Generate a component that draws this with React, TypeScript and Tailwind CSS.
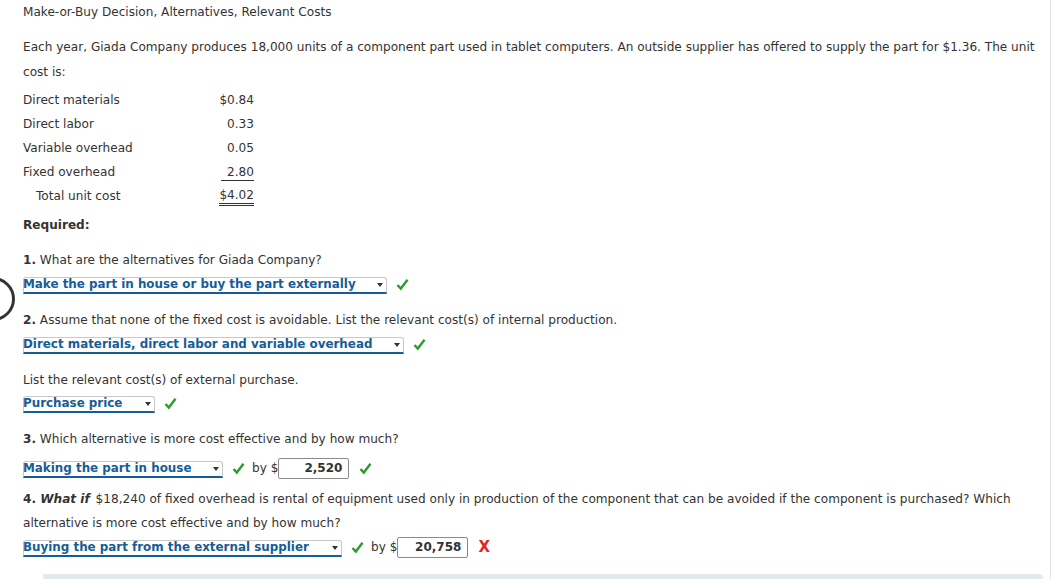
import type { ReactNode } from 'react';

const costs = [
  { label: 'Direct materials', value: '$0.84' },
  { label: 'Direct labor', value: '0.33' },
  { label: 'Variable overhead', value: '0.05' },
  { label: 'Fixed overhead', value: '2.80', line: 'single' },
  { label: 'Total unit cost', value: '$4.02', line: 'double', indent: true },
];

function Check() {
  return (
    <svg className="w-[13px] h-[13px] shrink-0" viewBox="0 0 13 13">
      <path d="M1.5 7 L4.8 10.6 L11.5 1.8" fill="none" stroke="#2c9c2c" strokeWidth="2.4" strokeLinejoin="miter" />
    </svg>
  );
}

function Select({ width, children }: { width: string; children: ReactNode }) {
  return (
    <div
      className={`${width} h-[17px] mt-[2px] flex items-center justify-between bg-white border border-[#c8c8c8] border-b-2 border-b-[#155d97] rounded-t-[3px] text-[11.9px] font-bold text-[#155d97] leading-none shrink-0`}
    >
      <span className="-ml-px whitespace-nowrap">{children}</span>
      <span className="mr-[3px] w-0 h-0 border-l-[3.5px] border-r-[3.5px] border-t-[4px] border-l-transparent border-r-transparent border-t-[#333]" />
    </div>
  );
}

function Amount({ children }: { children: ReactNode }) {
  return (
    <div className="w-[71px] h-[21px] border border-[#8a8a8a] rounded-[2px] flex items-center justify-end pr-[6px] font-bold text-[12px] text-[#333] shrink-0">
      {children}
    </div>
  );
}

export default function App() {
  return (
    <div
      className="relative w-[1054px] h-[579px] overflow-hidden bg-white text-[12.1px] text-[#333]"
      style={{ fontFamily: '"DejaVu Sans", Verdana, sans-serif' }}
    >
      <div className="absolute left-[-29px] top-[277px] w-[44px] h-[44px] rounded-full border-[3px] border-[#333]" />

      <div className="w-[1051px] h-full border-r border-[#e4e4e4] pl-[23px] pr-[2px] pt-[2px]">
        <h1 className="leading-[20px] font-normal">Make-or-Buy Decision, Alternatives, Relevant Costs</h1>

        <p className="mt-[13px] leading-[25px]">
          Each year, Giada Company produces 18,000 units of a component part used in tablet computers. An outside supplier has offered to supply the part for $1.36. The unit cost is:
        </p>

        <div className="mt-[3px] w-[231px]">
          {costs.map((c) => (
            <div key={c.label} className="h-[24px] flex items-center justify-between">
              <span className={c.indent ? 'pl-[13px]' : ''}>{c.label}</span>
              <span
                className={
                  c.line === 'single'
                    ? 'border-b border-[#333] leading-[16px] pl-[6px]'
                    : c.line === 'double'
                    ? 'border-b-[3px] border-double border-[#333] leading-[16px]'
                    : ''
                }
              >
                {c.value}
              </span>
            </div>
          ))}
        </div>

        <p className="mt-[7px] leading-[20px] font-bold">Required:</p>

        <p className="mt-[15px] leading-[20px]">
          <b>1.</b> What are the alternatives for Giada Company?
        </p>
        <div className="mt-[2px] h-[24px] flex items-center gap-[9px]">
          <Select width="w-[364px]">Make the part in house or buy the part externally</Select>
          <Check />
        </div>

        <p className="mt-[14px] leading-[20px]">
          <b>2.</b> Assume that none of the fixed cost is avoidable. List the relevant cost(s) of internal production.
        </p>
        <div className="mt-[2px] h-[24px] flex items-center gap-[9px]">
          <Select width="w-[381px]">Direct materials, direct labor and variable overhead</Select>
          <Check />
        </div>

        <p className="mt-[14px] leading-[20px]">List the relevant cost(s) of external purchase.</p>
        <div className="mt-[1px] h-[24px] flex items-center gap-[9px]">
          <Select width="w-[132px]">Purchase price</Select>
          <Check />
        </div>

        <p className="mt-[14px] leading-[20px]">
          <b>3.</b> Which alternative is more cost effective and by how much?
        </p>
        <div className="mt-[7px] h-[24px] flex items-center">
          <Select width="w-[200px]">Making the part in house</Select>
          <span className="ml-[9px]"><Check /></span>
          <span className="ml-[7px]">by $</span>
          <Amount>2,520</Amount>
          <span className="ml-[10px]"><Check /></span>
        </div>

        <p className="mt-[7px] leading-[24px]">
          <b>4. <i className="pr-[2px]">What if</i></b> $18,240 of fixed overhead is rental of equipment used only in production of the component that can be avoided if the component is purchased? Which alternative is more cost effective and by how much?
        </p>
        <div className="h-[24px] flex items-center">
          <Select width="w-[319px]">Buying the part from the external supplier</Select>
          <span className="ml-[9px]"><Check /></span>
          <span className="ml-[7px]">by $</span>
          <Amount>20,758</Amount>
          <span className="ml-[10px] font-bold text-[15px] leading-none text-[#e5261f]">X</span>
        </div>

        <div className="mt-[15px] ml-[20px] mr-[5px] h-[12px] bg-[#e3eaee] rounded-tr-[4px]" />
      </div>
    </div>
  );
}
